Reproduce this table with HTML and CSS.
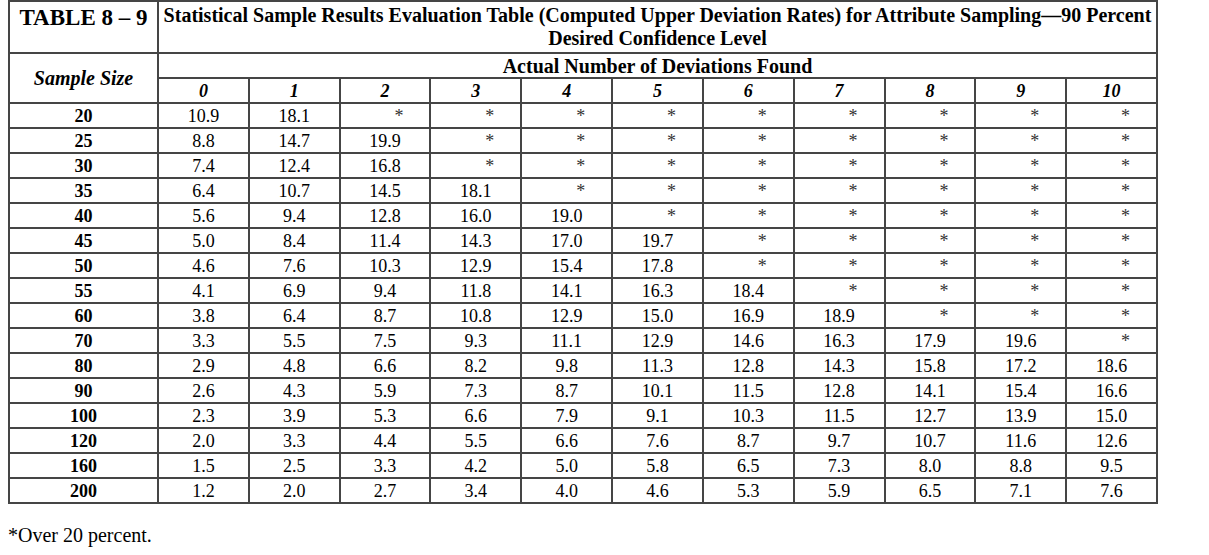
FILE: index.html
```html
<!DOCTYPE html>
<html>
<head>
<meta charset="utf-8">
<link rel="stylesheet" href="styles.css">
</head>
<body>
<table class="tbl">
  <colgroup>
    <col class="c-size">
    <col class="c-num"><col class="c-num"><col class="c-num"><col class="c-num"><col class="c-num"><col class="c-num"><col class="c-num"><col class="c-num"><col class="c-num"><col class="c-num"><col class="c-num">
  </colgroup>
  <tr class="r-title">
    <th class="tbl-no">TABLE 8 – 9</th>
    <th class="tbl-title" colspan="11">Statistical Sample Results Evaluation Table (Computed Upper Deviation Rates) for Attribute Sampling—90 Percent Desired Confidence Level</th>
  </tr>
  <tr class="r-head">
    <th class="hd-size" rowspan="2">Sample Size</th>
    <th class="hd-group" colspan="11">Actual Number of Deviations Found</th>
  </tr>
  <tr class="r-head">
    <th class="hd-n">0</th><th class="hd-n">1</th><th class="hd-n">2</th><th class="hd-n">3</th><th class="hd-n">4</th><th class="hd-n">5</th><th class="hd-n">6</th><th class="hd-n">7</th><th class="hd-n">8</th><th class="hd-n">9</th><th class="hd-n">10</th>
  </tr>
  <tr><th>20</th><td>10.9</td><td>18.1</td><td class="s">*</td><td class="s">*</td><td class="s">*</td><td class="s">*</td><td class="s">*</td><td class="s">*</td><td class="s">*</td><td class="s">*</td><td class="s">*</td></tr>
  <tr><th>25</th><td>8.8</td><td>14.7</td><td>19.9</td><td class="s">*</td><td class="s">*</td><td class="s">*</td><td class="s">*</td><td class="s">*</td><td class="s">*</td><td class="s">*</td><td class="s">*</td></tr>
  <tr><th>30</th><td>7.4</td><td>12.4</td><td>16.8</td><td class="s">*</td><td class="s">*</td><td class="s">*</td><td class="s">*</td><td class="s">*</td><td class="s">*</td><td class="s">*</td><td class="s">*</td></tr>
  <tr><th>35</th><td>6.4</td><td>10.7</td><td>14.5</td><td>18.1</td><td class="s">*</td><td class="s">*</td><td class="s">*</td><td class="s">*</td><td class="s">*</td><td class="s">*</td><td class="s">*</td></tr>
  <tr><th>40</th><td>5.6</td><td>9.4</td><td>12.8</td><td>16.0</td><td>19.0</td><td class="s">*</td><td class="s">*</td><td class="s">*</td><td class="s">*</td><td class="s">*</td><td class="s">*</td></tr>
  <tr><th>45</th><td>5.0</td><td>8.4</td><td>11.4</td><td>14.3</td><td>17.0</td><td>19.7</td><td class="s">*</td><td class="s">*</td><td class="s">*</td><td class="s">*</td><td class="s">*</td></tr>
  <tr><th>50</th><td>4.6</td><td>7.6</td><td>10.3</td><td>12.9</td><td>15.4</td><td>17.8</td><td class="s">*</td><td class="s">*</td><td class="s">*</td><td class="s">*</td><td class="s">*</td></tr>
  <tr><th>55</th><td>4.1</td><td>6.9</td><td>9.4</td><td>11.8</td><td>14.1</td><td>16.3</td><td>18.4</td><td class="s">*</td><td class="s">*</td><td class="s">*</td><td class="s">*</td></tr>
  <tr><th>60</th><td>3.8</td><td>6.4</td><td>8.7</td><td>10.8</td><td>12.9</td><td>15.0</td><td>16.9</td><td>18.9</td><td class="s">*</td><td class="s">*</td><td class="s">*</td></tr>
  <tr><th>70</th><td>3.3</td><td>5.5</td><td>7.5</td><td>9.3</td><td>11.1</td><td>12.9</td><td>14.6</td><td>16.3</td><td>17.9</td><td>19.6</td><td class="s">*</td></tr>
  <tr><th>80</th><td>2.9</td><td>4.8</td><td>6.6</td><td>8.2</td><td>9.8</td><td>11.3</td><td>12.8</td><td>14.3</td><td>15.8</td><td>17.2</td><td>18.6</td></tr>
  <tr><th>90</th><td>2.6</td><td>4.3</td><td>5.9</td><td>7.3</td><td>8.7</td><td>10.1</td><td>11.5</td><td>12.8</td><td>14.1</td><td>15.4</td><td>16.6</td></tr>
  <tr><th>100</th><td>2.3</td><td>3.9</td><td>5.3</td><td>6.6</td><td>7.9</td><td>9.1</td><td>10.3</td><td>11.5</td><td>12.7</td><td>13.9</td><td>15.0</td></tr>
  <tr><th>120</th><td>2.0</td><td>3.3</td><td>4.4</td><td>5.5</td><td>6.6</td><td>7.6</td><td>8.7</td><td>9.7</td><td>10.7</td><td>11.6</td><td>12.6</td></tr>
  <tr><th>160</th><td>1.5</td><td>2.5</td><td>3.3</td><td>4.2</td><td>5.0</td><td>5.8</td><td>6.5</td><td>7.3</td><td>8.0</td><td>8.8</td><td>9.5</td></tr>
  <tr><th>200</th><td>1.2</td><td>2.0</td><td>2.7</td><td>3.4</td><td>4.0</td><td>4.6</td><td>5.3</td><td>5.9</td><td>6.5</td><td>7.1</td><td>7.6</td></tr>
</table>
<p class="note">*Over 20 percent.</p>
</body>
</html>
```
FILE: styles.css
```css
body {
  margin: 0 8px;
  font-family: "Liberation Serif", "Times New Roman", serif;
  color: #000;
  background: #fff;
}
.tbl {
  border-collapse: collapse;
  width: 1150px;
  table-layout: fixed;
  font-size: 18px;
}
.c-size { width: 149px; }
.tbl th, .tbl td {
  border: 2px solid #454545;
  padding: 0;
  height: 23px;
  line-height: 20px;
  text-align: center;
  vertical-align: middle;
}
.tbl td { font-weight: normal; }
.tbl td.s { padding-left: 28px; color: #333; }
.tbl .r-title th { height: 50px; }
.tbl th.tbl-no {
  font-size: 23px;
  line-height: 24px;
  height: 46px;
  vertical-align: top;
  padding-top: 4px;
  text-align: center;
}
.tbl th.tbl-title {
  font-size: 20px;
  line-height: 23px;
  padding: 0 4px;
}
.tbl th.hd-size { font-style: italic; font-size: 20px; }
.tbl th.hd-group { font-size: 20px; height: 23px; }
.tbl th.hd-n { font-style: italic; }
.note {
  margin: 20px 0 0;
  font-size: 20px;
}
```
